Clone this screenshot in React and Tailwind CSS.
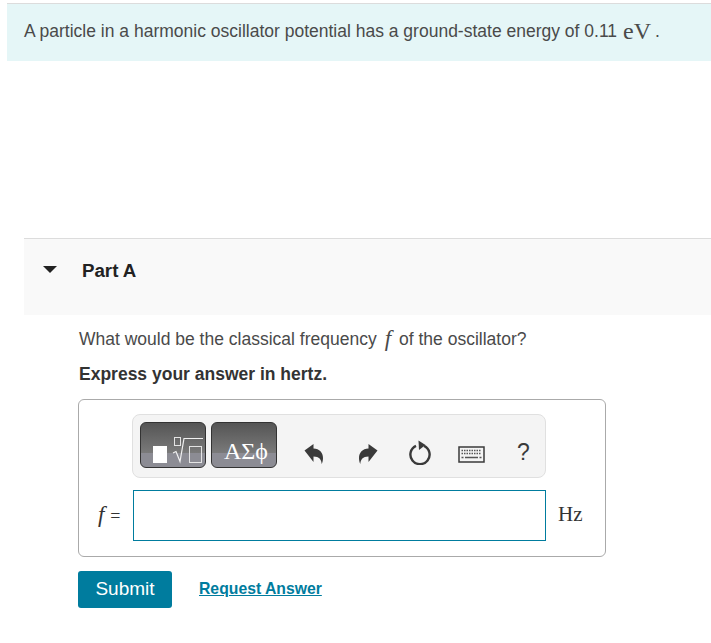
import React from 'react';

const sans = { fontFamily: '"Liberation Sans", Arial, sans-serif' };

const MathTemplateIcon = () => (
  <svg width="64" height="44" viewBox="0 0 64 44" fill="none">
    <rect x="12" y="23" width="14" height="17" fill="#fff" />
    <rect x="33.500" y="14.500" width="6" height="8" stroke="#e4e4e4" strokeWidth="1" />
    <path d="M32 30l3-1.500 4 10L43 15.500h19" stroke="#f0f0f0" strokeWidth="1.200" />
    <rect x="48.500" y="23.500" width="12" height="16" stroke="#e4e4e4" strokeWidth="1" />
  </svg>
);

const UndoIcon = () => (
  <svg width="20" height="22" viewBox="0 0 20 22" fill="#3a3a3a">
    <path d="M.5 7.500 9.500 1v4.500c6 .3 9.500 4 9.500 9.500 0 2-.5 4.500-1.300 6-.2-4.500-2.500-7.500-8.200-7.500V19z" />
  </svg>
);

const RedoIcon = () => (
  <svg width="20" height="22" viewBox="0 0 20 22" fill="#3a3a3a">
    <path d="M19.500 7.500 10.500 1v4.500c-6 .3-9.500 4-9.500 9.500 0 2 .5 4.500 1.300 6 .2-4.500 2.500-7.500 8.200-7.500V19z" />
  </svg>
);

const ResetIcon = () => (
  <svg width="24" height="26" viewBox="0 0 24 26" fill="none">
    <path d="M8 6.800a9.600 9.600 0 1 0 8 0" stroke="#3a3a3a" strokeWidth="2.400" />
    <path d="M10.500 1.500 17.500 6l-6.500 5z" fill="#3a3a3a" />
  </svg>
);

const KeyboardIcon = () => (
  <svg width="27" height="17" viewBox="0 0 27 17" fill="none">
    <rect x="1" y="1" width="25" height="15" fill="#f4f4f4" stroke="#3a3a3a" strokeWidth="1.500" />
    <path d="M3.500 4.500h20M3.500 7.500h20" stroke="#555" strokeWidth="1.500" strokeDasharray="1.500 1" />
    <path d="M3.500 11.500h2M7 11.500h13M21.500 11.500h2" stroke="#555" strokeWidth="1.500" />
  </svg>
);

const ToolButton = ({ children }) => (
  <div className="flex h-[46px] w-[66px] items-center justify-center overflow-hidden rounded-[6px] border border-[#333] bg-gradient-to-b from-[#555] from-0% via-[#7a7a7a] via-68% to-[#8c8c94] to-68%">
    {children}
  </div>
);

export default function App() {
  return (
    <div className="min-h-[643px] bg-white text-[17.5px] text-[#4a4a4a]" style={sans}>
      <div className="pt-[3px] pl-[7px]">
        <div className="flex h-[58px] items-center border-t border-[#dcdcdc] bg-[#e5f6f7] pl-[17px] pb-[2px]">
          A particle in a harmonic oscillator potential has a ground-state energy of 0.11
          <span className="ml-[6px] -mt-[2px] font-['Liberation_Serif'] text-[24px] leading-none">eV</span>
          <span className="ml-[4px]">.</span>
        </div>
      </div>

      <div className="mt-[177px] ml-[24px] flex h-[77px] items-start border-t border-[#dcdcdc] bg-[#f9f9f9]">
        <div className="mt-[27px] ml-[19px] h-0 w-0 border-x-[7px] border-t-[7px] border-x-transparent border-t-[#222]" />
        <div className="mt-[21px] ml-[25px] text-[18.700px] font-bold leading-[22px] text-[#222]">Part A</div>
      </div>

      <div className="pl-[79px]">
        <div className="mt-[13px] flex h-[22px] items-center">
          What would be the classical frequency
          <span className="mx-[8px] font-['Liberation_Serif'] text-[23px] italic">f</span>
          of the oscillator?
        </div>
        <div className="mt-[13px] h-[22px] font-bold leading-[22px] text-[#333]">Express your answer in hertz.</div>

        <div className="mt-[14px] -ml-px h-[158px] w-[528px] rounded-[6px] border border-[#aaa] pt-[14px] pl-[53px]">
          <div className="flex h-[64px] w-[414px] items-start rounded-[8px] border border-[#e0e0e0] bg-[#f4f4f4] pt-[7px] pl-[7px]">
            <div className="flex gap-[5px]">
              <ToolButton>
                <MathTemplateIcon />
              </ToolButton>
              <ToolButton>
                <span className="pt-[12px] pl-[4px] font-['Liberation_Serif'] text-[24px] leading-none text-white">ΑΣϕ</span>
              </ToolButton>
            </div>
            <div className="mt-[20px] ml-[27px] flex items-center">
              <UndoIcon />
              <div className="ml-[34px]"><RedoIcon /></div>
              <div className="ml-[30px] -mt-[3px]"><ResetIcon /></div>
              <div className="ml-[26px] mt-[2px]"><KeyboardIcon /></div>
              <span className="ml-[32px] -mt-[2px] text-[23px] leading-none text-[#3a3a3a]">?</span>
            </div>
          </div>

          <div className="-ml-[36px] mt-[12px] flex items-center">
            <span className="w-[36px] pl-[2px] font-['Liberation_Serif'] text-[23px] text-[#333]">
              <i>f</i> <span className="text-[18px]">=</span>
            </span>
            <div className="ml-[1px] h-[51px] w-[413px] border border-[#007c9e] bg-white" />
            <span className="ml-[12px] -mt-[2px] font-['Liberation_Serif'] text-[21px] text-[#333]">Hz</span>
          </div>
        </div>

        <div className="-ml-px mt-[14px] flex items-center">
          <button className="h-[37px] w-[94px] rounded-[3px] bg-[#007c9e] text-center text-[19px] text-white">Submit</button>
          <a className="ml-[27px] -mt-[2px] text-[15.750px] font-bold text-[#007c9e] underline">Request Answer</a>
        </div>
      </div>
    </div>
  );
}
